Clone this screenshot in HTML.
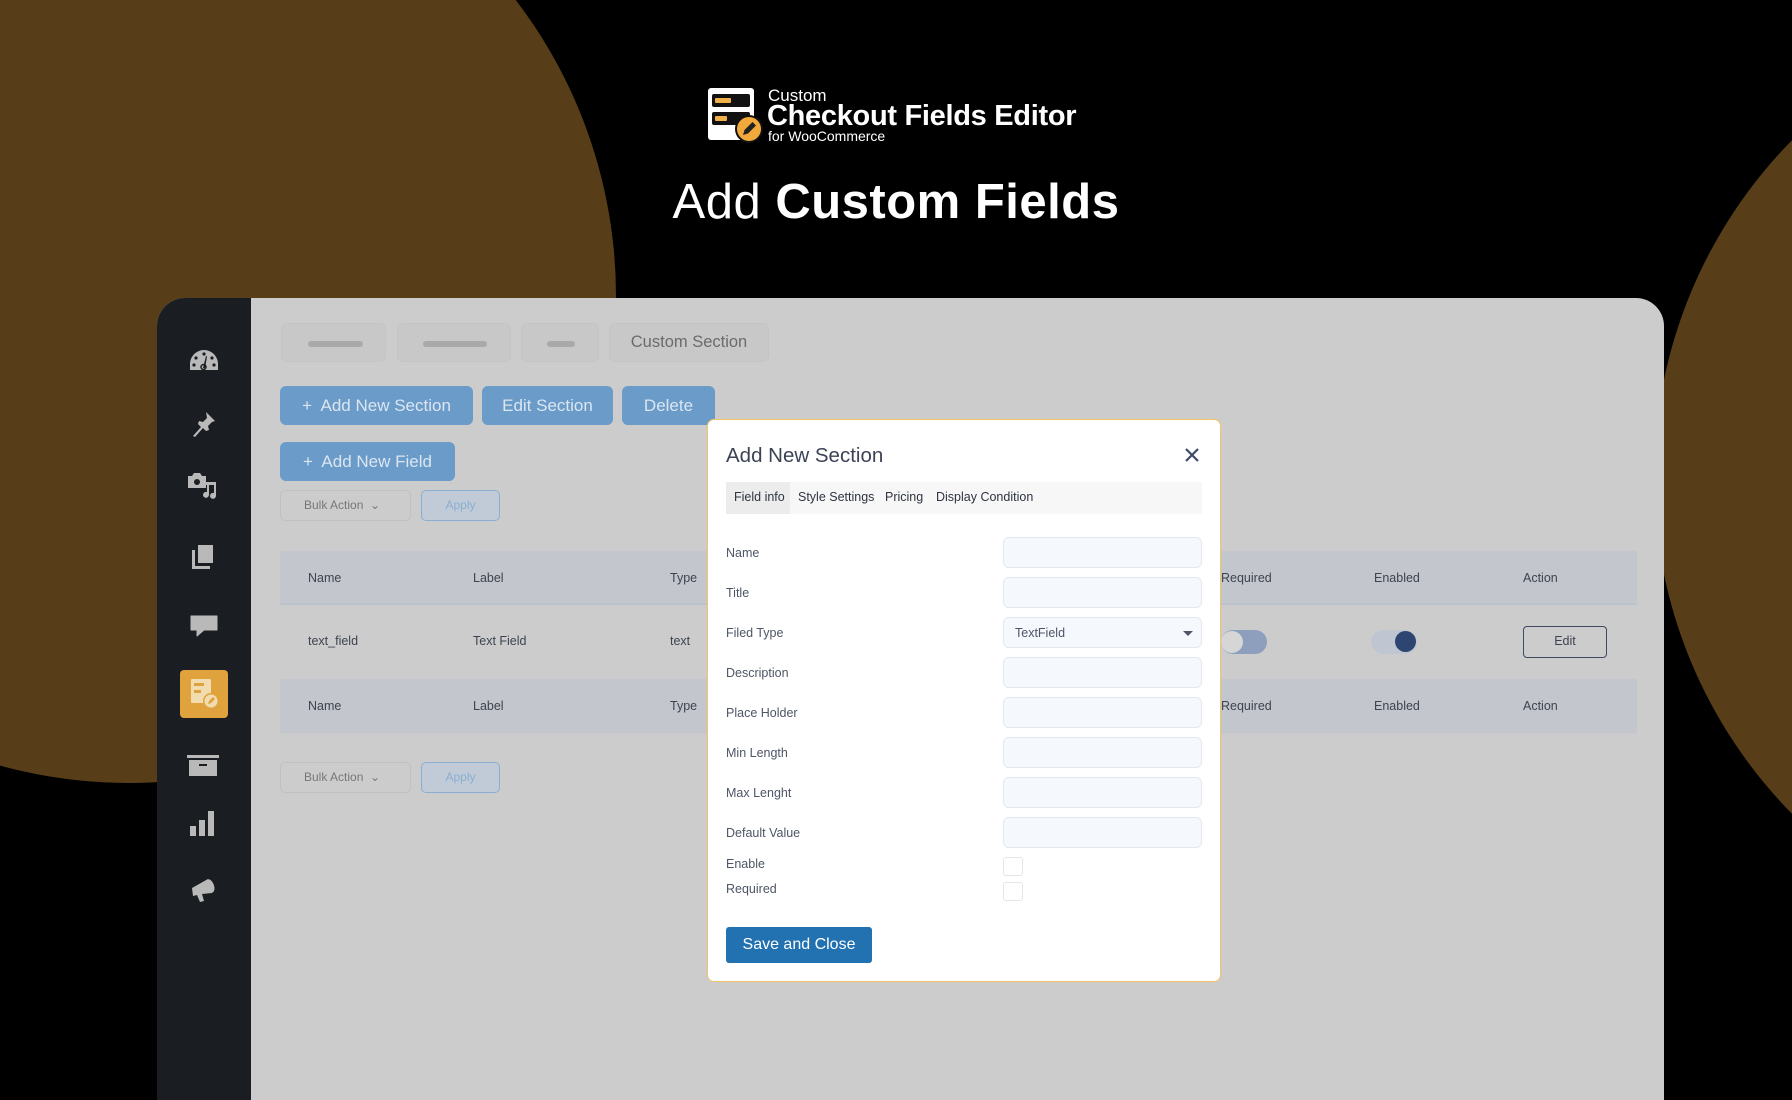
<!DOCTYPE html>
<html><head><meta charset="utf-8">
<style>
*{margin:0;padding:0;box-sizing:border-box}
html,body{width:1792px;height:1100px;overflow:hidden;background:#000}
body{font-family:"Liberation Sans",sans-serif}
#wrap{position:relative;width:1792px;height:1100px;overflow:hidden;background:#000}
.abs{position:absolute}
.circ{position:absolute;border-radius:50%;background:#573e18}
.panel{left:157px;top:298px;width:1507px;height:802px;border-radius:28px 28px 0 0;background:#cccccc;overflow:hidden}
.side{left:0;top:0;width:94px;height:100%;background:#1a1d21}
.t{position:absolute;white-space:nowrap}
.tabbox{position:absolute;top:25px;height:39px;background:#c8c8c8;border-radius:6px;border:1px solid #c4c4c4}
.bar{position:absolute;top:17px;height:6px;border-radius:3px;background:#a9a9a9}
.btn{position:absolute;height:39px;background:#6a9bc9;border-radius:6px;color:#dbe6f1;font-size:17px;line-height:39px;text-align:center}
.bulk{position:absolute;height:31px;border:1px solid #c0c0c0;border-radius:5px;color:#777;font-size:12px;line-height:29px}
.apply{position:absolute;height:31px;border:1px solid #8aaed2;background:#c0cbd7;border-radius:5px;color:#8aaed2;font-size:12px;line-height:29px;text-align:center}
.row{position:absolute;left:123px;width:1357px;background:#c3c6cc}
.cell{position:absolute;font-size:12.5px;color:#3d4450}
.modal{left:707px;top:419px;width:514px;height:563px;background:#fff;border:1.5px solid #f0c46a;border-radius:7px}
.lbl{position:absolute;left:18px;font-size:12.5px;color:#4d5566}
.inp{position:absolute;left:295px;width:199px;height:31px;border:1px solid #e3e8f0;background:#f5f8fc;border-radius:6px}
.chk{position:absolute;left:295px;width:20px;height:19px;border:1px solid #e3e6ea;border-radius:3px;background:#fff}
</style></head><body>
<div id="wrap">
<div class="circ" style="left:-358px;top:-191px;width:974px;height:974px"></div>
<div class="circ" style="left:1654px;top:-3px;width:960px;height:960px"></div>

<svg class="abs" style="left:705px;top:86px" width="60" height="60" viewBox="0 0 60 60">
<rect x="3" y="2" width="46" height="52" rx="3" fill="#fff"/>
<rect x="7" y="8" width="38" height="13" rx="2" fill="#111"/>
<rect x="10" y="12" width="16" height="5" rx="1" fill="#f0b048"/>
<rect x="7" y="26" width="38" height="13" rx="2" fill="#111"/>
<rect x="10" y="30" width="12" height="5" rx="1" fill="#f0b048"/>
<circle cx="44" cy="43" r="14" fill="#111"/>
<circle cx="44" cy="43" r="12" fill="#f2a93b"/>
<path d="M38 49l1.5-5 8-8 3.5 3.5-8 8z" fill="#222"/>
</svg>
<div class="t" style="left:768px;top:86px;font-size:17px;color:#fff">Custom</div>
<div class="t" style="left:767px;top:100px;font-size:29px;font-weight:bold;color:#fff;letter-spacing:-0.3px">Checkout Fields Editor</div>
<div class="t" style="left:768px;top:128px;font-size:14px;color:#fff">for WooCommerce</div>
<div class="t" style="left:0;width:1792px;text-align:center;top:174px;font-size:49px;color:#fff;letter-spacing:0.5px">Add <b>Custom Fields</b></div>

<div class="abs panel">
 <div class="abs side">
  <svg class="abs" style="left:0;top:0" width="94" height="700" viewBox="0 0 94 700" fill="#b9b9b9">
   <path d="M33 66a14 14 0 0 1 28 0v6H33z"/>
   <circle cx="47" cy="56" r="1.6" fill="#1a1d21"/><circle cx="39" cy="60" r="1.6" fill="#1a1d21"/><circle cx="55" cy="60" r="1.6" fill="#1a1d21"/><circle cx="37" cy="67" r="1.6" fill="#1a1d21"/><circle cx="57" cy="67" r="1.6" fill="#1a1d21"/>
   <path d="M46 70l3-12 1 .4-2 12z" fill="#1a1d21"/><circle cx="46.5" cy="69" r="2.5" fill="none" stroke="#1a1d21" stroke-width="1.5"/>
   <path d="M49 114l9 9-3 1-4 4 1 4-3 1-3-3-8 9-2-1 8-9-3-3 1-3 4 1 4-4z"/>
   <path d="M31 178h4l2-3h6l2 3h4v12H31z"/><circle cx="40" cy="184" r="3" fill="#1a1d21"/>
   <path d="M49 184h10v14a3 3 0 1 1-2-3v-8h-5v10a3 3 0 1 1-2-3v-7h-1z"/>
   <rect x="41" y="247" width="15" height="18"/><path d="M35 252h3v16h15v3H35z"/>
   <path d="M34 318h26v14H47l-7 6v-6h-6z" stroke="#b9b9b9" stroke-width="1" stroke-linejoin="round"/>
   <rect x="30" y="457" width="32" height="3"/><rect x="32" y="462" width="28" height="16"/><rect x="42" y="466" width="8" height="2" fill="#1a1d21"/>
   <rect x="33" y="528" width="6" height="10"/><rect x="42" y="522" width="6" height="16"/><rect x="51" y="513" width="6" height="25"/>
   <path d="M35 590l16-9 4 14-10 1 2 7-4 1-3-7-4 1z"/><ellipse cx="53" cy="588" rx="4" ry="7" transform="rotate(-20 53 588)"/>
  </svg>
  <div class="abs" style="left:23px;top:372px;width:48px;height:48px;background:#e0a23c;border-radius:4px">
   <svg width="48" height="48" viewBox="0 0 48 48"><rect x="11" y="9" width="20" height="24" rx="1" fill="#f1dcb0"/><rect x="14" y="13" width="10" height="3" fill="#e0a23c"/><rect x="14" y="20" width="7" height="3" fill="#e0a23c"/><circle cx="31" cy="31" r="8" fill="#e0a23c"/><circle cx="31" cy="31" r="6.5" fill="#f1dcb0"/><path d="M28 34l1-3 4-4 2 2-4 4z" fill="#e0a23c"/></svg>
  </div>
 </div>

 <div class="tabbox" style="left:124px;width:105px"><div class="bar" style="left:26px;width:55px"></div></div>
 <div class="tabbox" style="left:240px;width:114px"><div class="bar" style="left:25px;width:64px"></div></div>
 <div class="tabbox" style="left:364px;width:78px"><div class="bar" style="left:25px;width:28px"></div></div>
 <div class="tabbox" style="left:452px;width:160px;font-size:16.5px;color:#6b6b6b;line-height:37px;text-align:center">Custom Section</div>

 <div class="btn" style="left:123px;top:88px;width:193px">+&nbsp; Add New Section</div>
 <div class="btn" style="left:325px;top:88px;width:131px">Edit Section</div>
 <div class="btn" style="left:465px;top:88px;width:93px">Delete</div>
 <div class="btn" style="left:123px;top:144px;width:175px">+&nbsp; Add New Field</div>
 <div class="bulk" style="left:123px;top:192px;width:131px;padding-left:23px">Bulk Action &nbsp;&#8964;</div>
 <div class="apply" style="left:264px;top:192px;width:79px">Apply</div>

 <div class="row" style="top:253px;height:54px;border-bottom:2px solid #bbc2cc"></div>
 <div class="row" style="top:381px;height:54px"></div>
 <div class="cell" style="left:151px;top:273px">Name</div><div class="cell" style="left:316px;top:273px">Label</div><div class="cell" style="left:513px;top:273px">Type</div>
 <div class="cell" style="left:1064px;top:273px">Required</div><div class="cell" style="left:1217px;top:273px">Enabled</div><div class="cell" style="left:1366px;top:273px">Action</div>
 <div class="cell" style="left:151px;top:336px">text_field</div><div class="cell" style="left:316px;top:336px">Text Field</div><div class="cell" style="left:513px;top:336px">text</div>
 <div class="abs" style="left:1064px;top:332px;width:46px;height:24px;border-radius:12px;background:#8d9fbd"><div class="abs" style="left:0;top:1px;width:22px;height:22px;border-radius:50%;background:#d6d6d6"></div></div>
 <div class="abs" style="left:1214px;top:332px;width:46px;height:24px;border-radius:12px;background:#bfc6d1"><div class="abs" style="left:24px;top:1px;width:21px;height:21px;border-radius:50%;background:#2d4570"></div></div>
 <div class="abs" style="left:1366px;top:328px;width:84px;height:32px;border:1.5px solid #3d4a60;border-radius:4px;font-size:12.5px;color:#3d4450;text-align:center;line-height:29px">Edit</div>
 <div class="cell" style="left:151px;top:401px">Name</div><div class="cell" style="left:316px;top:401px">Label</div><div class="cell" style="left:513px;top:401px">Type</div>
 <div class="cell" style="left:1064px;top:401px">Required</div><div class="cell" style="left:1217px;top:401px">Enabled</div><div class="cell" style="left:1366px;top:401px">Action</div>
 <div class="bulk" style="left:123px;top:464px;width:131px;padding-left:23px">Bulk Action &nbsp;&#8964;</div>
 <div class="apply" style="left:264px;top:464px;width:79px">Apply</div>
</div>

<div class="abs modal">
 <div class="t" style="left:18px;top:24px;font-size:20.5px;color:#3c4354">Add New Section</div>
 <svg class="abs" style="left:475px;top:26px" width="18" height="18" viewBox="0 0 18 18"><path d="M3 3l12 12M15 3L3 15" stroke="#3c4a66" stroke-width="2.2"/></svg>
 <div class="abs" style="left:18px;top:62px;width:476px;height:32px;background:#f7f7f7"></div>
 <div class="abs" style="left:18px;top:62px;width:64px;height:32px;background:#ececec"></div>
 <div class="t" style="left:26px;top:70px;font-size:12.5px;color:#2e3440">Field info</div>
 <div class="t" style="left:90px;top:70px;font-size:12.5px;color:#2e3440">Style Settings</div>
 <div class="t" style="left:177px;top:70px;font-size:12.5px;color:#2e3440">Pricing</div>
 <div class="t" style="left:228px;top:70px;font-size:12.5px;color:#2e3440">Display Condition</div>

 <div class="lbl" style="top:126px">Name</div><div class="inp" style="top:117px"></div>
 <div class="lbl" style="top:166px">Title</div><div class="inp" style="top:157px"></div>
 <div class="lbl" style="top:206px">Filed Type</div><div class="inp" style="top:197px"><span class="t" style="left:11px;top:8px;font-size:12.5px;color:#4d5566">TextField</span><svg class="abs" style="left:178px;top:12px" width="12" height="7"><path d="M1 1h10L6 6z" fill="#4d5566"/></svg></div>
 <div class="lbl" style="top:246px">Description</div><div class="inp" style="top:237px"></div>
 <div class="lbl" style="top:286px">Place Holder</div><div class="inp" style="top:277px"></div>
 <div class="lbl" style="top:326px">Min Length</div><div class="inp" style="top:317px"></div>
 <div class="lbl" style="top:366px">Max Lenght</div><div class="inp" style="top:357px"></div>
 <div class="lbl" style="top:406px">Default Value</div><div class="inp" style="top:397px"></div>
 <div class="lbl" style="top:437px">Enable</div><div class="chk" style="top:437px"></div>
 <div class="lbl" style="top:462px">Required</div><div class="chk" style="top:462px"></div>
 <div class="abs" style="left:18px;top:507px;width:146px;height:36px;background:#2271b1;border-radius:3px;color:#fff;font-size:16px;line-height:36px;text-align:center">Save and Close</div>
</div>
</div>
</body></html>
